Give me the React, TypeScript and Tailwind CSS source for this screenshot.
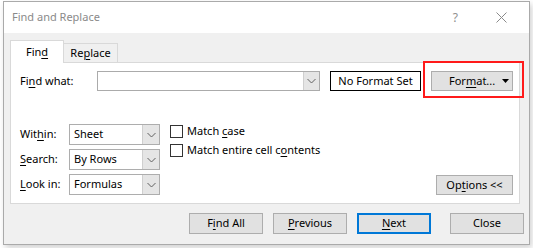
import React from "react";

const font = { fontFamily: '"Segoe UI", "Noto Sans", sans-serif' };

const btn = "flex h-[21px] w-[74px] items-center justify-center border border-[#adadad] bg-[#e1e1e1] text-[11px] text-black";

function Chevron() {
  return (
    <svg width="9" height="6" viewBox="0 0 9 6" className="text-[#606060]">
      <path d="M0.5 1 L4.5 5 L8.5 1" fill="none" stroke="currentColor" strokeWidth="1" />
    </svg>
  );
}

function Select({ value }: { value: string }) {
  return (
    <div className="flex h-[21px] w-[91px] border border-[#adadad] bg-white">
      <div className="flex flex-1 items-center pl-[4px] text-[11px] text-black">{value}</div>
      <div className="flex w-[17px] items-center justify-center border-l border-[#cfcfcf] bg-[#e5e5e5]">
        <Chevron />
      </div>
    </div>
  );
}

function Check({ children }: { children: React.ReactNode }) {
  return (
    <div className="flex h-[14px] items-center">
      <div className="h-[13px] w-[13px] border border-[#333333] bg-white" />
      <span className="ml-[4px] text-[11px] text-black">{children}</span>
    </div>
  );
}

export default function App() {
  return (
    <div className="relative h-[248px] w-[533px] overflow-hidden bg-white" style={font}>
      <div className="ml-[3px] mt-[1px] flex h-[244px] w-[527px] flex-col border border-[#aaaaaa] shadow-[2px_3px_6px_rgba(0,0,0,0.18)]">
        {/* title bar */}
        <div className="flex h-[31px] items-center bg-white pl-[8px] text-[11px] text-[#8a8a8a]">
          <span>Find and Replace</span>
          <span className="ml-auto mr-[38px] text-[12px] text-[#909090]">?</span>
          <svg width="11" height="11" viewBox="0 0 11 11" className="mr-[22px]">
            <path d="M0.5 0.5 L10.5 10.5 M10.5 0.5 L0.5 10.5" stroke="#8a8a8a" strokeWidth="1" />
          </svg>
        </div>

        {/* body */}
        <div className="flex flex-1 flex-col bg-[#f0f0f0] pl-[6px] pt-[7px]">
          {/* tabs */}
          <div className="relative z-10 flex h-[22px] items-start">
            <div className="flex h-[23px] w-[54px] items-center justify-center border border-b-0 border-[#d9d9d9] bg-white text-[11px] text-black">
              <span>
                Fin<u className="underline-offset-2">d</u>
              </span>
            </div>
            <div className="mt-[3px] flex h-[19px] w-[54px] items-center justify-center border border-l-0 border-b-0 border-[#d9d9d9] bg-[#f0f0f0] text-[11px] text-black">
              <span>
                Re<u className="underline-offset-2">p</u>lace
              </span>
            </div>
          </div>

          {/* panel */}
          <div className="relative flex h-[142px] w-[510px] flex-col border border-[#d9d9d9] bg-white pl-[9px]">
            <div className="pointer-events-none absolute left-[412px] top-[-2px] h-[37px] w-[101px] border-2 border-[#ff1a1a]" />

            <div className="mt-[8px] flex items-center">
              <div className="w-[77px] text-[11px] text-black">
                Fi<u className="underline-offset-2">n</u>d what:
              </div>
              <div className="flex h-[20px] w-[223px] border border-[#ababab] bg-white">
                <div className="flex-1" />
                <div className="flex w-[16px] items-center justify-center border-l border-[#cfcfcf] bg-[#e5e5e5]">
                  <Chevron />
                </div>
              </div>
              <div className="ml-[10px] flex h-[20px] w-[91px] items-center justify-center border border-black bg-white text-[11px] text-black">
                No Format Set
              </div>
              <div className="ml-[10px] flex h-[20px] w-[82px] items-center border border-[#adadad] bg-[#e1e1e1] text-[11px] text-black">
                <span className="ml-[17px]">
                  For<u className="underline-offset-2">m</u>at...
                </span>
                <svg width="7" height="4" viewBox="0 0 7 4" className="ml-auto mr-[3px]">
                  <path d="M0 0 L7 0 L3.5 4 Z" fill="#000" />
                </svg>
              </div>
            </div>

            <div className="mt-[33px] flex items-start">
              <div className="flex flex-col gap-[4px]">
                {[
                  { label: <>Wit<u className="underline-offset-2">h</u>in:</>, value: "Sheet" },
                  { label: <><u className="underline-offset-2">S</u>earch:</>, value: "By Rows" },
                  { label: <><u className="underline-offset-2">L</u>ook in:</>, value: "Formulas" },
                ].map((r) => (
                  <div key={r.value} className="flex items-center">
                    <div className="w-[49px] text-[11px] text-black">{r.label}</div>
                    <Select value={r.value} />
                  </div>
                ))}
              </div>
              <div className="ml-[10px] flex flex-col gap-[5px]">
                <Check>
                  Match <u className="underline-offset-2">c</u>ase
                </Check>
                <Check>
                  Match entire cell c<u className="underline-offset-2">o</u>ntents
                </Check>
              </div>
              <div className="ml-auto mr-[6px] mt-[51px] flex h-[20px] w-[77px] items-center justify-center border border-[#adadad] bg-[#e1e1e1] text-[11px] text-black">
                <span>
                  Op<u className="underline-offset-2">t</u>ions &lt;&lt;
                </span>
              </div>
            </div>
          </div>

          {/* bottom buttons */}
          <div className="mt-[9px] flex pr-[5px]">
            <div className="ml-auto" />
            <div className={btn}>
              <span>
                F<u className="underline-offset-2">i</u>nd All
              </span>
            </div>
            <div className={`${btn} ml-[10px]`}>
              <span>
                <u className="underline-offset-2">P</u>revious
              </span>
            </div>
            <div className="ml-[10px] flex h-[21px] w-[74px] items-center justify-center border-2 border-[#0078d7] bg-[#e1e1e1] text-[11px] text-black">
              <span>
                <u className="underline-offset-2">N</u>ext
              </span>
            </div>
            <div className={`${btn} ml-[19px]`}>Close</div>
          </div>
        </div>
      </div>
    </div>
  );
}
